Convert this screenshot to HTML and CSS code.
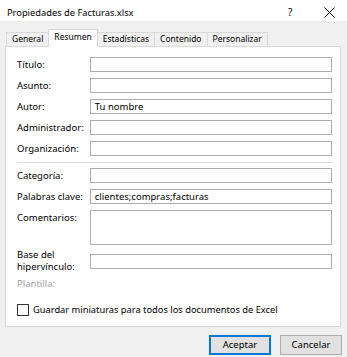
FILE: index.html
```html
<!DOCTYPE html>
<html lang="es">
<head>
    <meta charset="UTF-8">
    <title>Propiedades de Facturas.xlsx</title>
    <link rel="stylesheet" href="styles.css">
</head>
<body>
    <div id="dialog">
        <div class="titlebar">
            <span class="title">Propiedades de Facturas.xlsx</span>
            <span class="help">?</span>
            <span class="close">
                <svg width="11" height="11" viewBox="0 0 11 11"><path d="M0.5 0.5L10.5 10.5M10.5 0.5L0.5 10.5" stroke="#000" stroke-width="1" fill="none"/></svg>
            </span>
        </div>

        <ul class="tabs">
            <li>General</li>
            <li class="active">Resumen</li>
            <li>Estadísticas</li>
            <li>Contenido</li>
            <li>Personalizar</li>
        </ul>

        <div class="panel">
            <div class="row"><label>Título:</label><div class="field"></div></div>
            <div class="row"><label>Asunto:</label><div class="field"></div></div>
            <div class="row"><label>Autor:</label><div class="field">Tu nombre</div></div>
            <div class="row"><label>Administrador:</label><div class="field"></div></div>
            <div class="row"><label>Organización:</label><div class="field"></div></div>

            <div class="sep"></div>

            <div class="row"><label>Categoría:</label><div class="field"></div></div>
            <div class="row"><label>Palabras clave:</label><div class="field">clientes;compras;facturas</div></div>
            <div class="row tall"><label>Comentarios:</label><div class="field area"></div></div>
            <div class="row two"><label>Base del<br>hipervínculo:</label><div class="field"></div></div>
            <div class="row plain"><label class="dim">Plantilla:</label></div>

            <div class="check">
                <span class="box"></span>
                <span>Guardar miniaturas para todos los documentos de Excel</span>
            </div>
        </div>

        <div class="buttons">
            <div class="btn default">Aceptar</div>
            <div class="btn">Cancelar</div>
        </div>
    </div>
</body>
</html>
```

FILE: styles.css
```css
*{
    padding: 0;
    margin: 0;
    box-sizing: border-box;
}

body{
    width: 347px;
    height: 357px;
    overflow: hidden;
    background: #f0f0f0;
    font-family: "Noto Sans", "Open Sans", sans-serif;
    font-size: 9.5px;
    color: #000;
}

.titlebar{
    height: 21px;
    background: #fff;
    display: flex;
    align-items: center;
    padding: 3px 0 0 7px;
}

.title{
    flex: 1;
    font-size: 9.3px;
}

.help{
    width: 10px;
    margin-right: 26px;
    font-size: 10px;
}

.close{
    width: 11px;
    margin-right: 12px;
    display: flex;
}

.tabs{
    display: flex;
    align-items: flex-end;
    height: 25px;
    padding-left: 6px;
    list-style: none;
    font-size: 8.5px;
}

.tabs li{
    height: 14px;
    line-height: 12px;
    padding: 0 5px;
    border: 1px solid #d9d9d9;
    border-bottom: none;
    border-right: none;
    background: #f0f0f0;
    white-space: nowrap;
}

.tabs li:last-child{
    border-right: 1px solid #d9d9d9;
}

.tabs li.active{
    height: 18px;
    line-height: 14px;
    background: #fff;
    border-right: 1px solid #d9d9d9;
    margin-bottom: -1px;
    position: relative;
    z-index: 1;
}

.tabs li.active + li{
    border-left: none;
}

.panel{
    margin: 0 6px 0 5px;
    height: 281px;
    background: #fff;
    border: 1px solid #d9d9d9;
    padding: 10px 8px 0 11px;
}

.row{
    display: flex;
    align-items: center;
    height: 15px;
    margin-bottom: 6px;
}

.row label{
    width: 73px;
    white-space: nowrap;
}

.field{
    width: 243px;
    height: 15px;
    border: 1px solid #acacac;
    padding-left: 4px;
    line-height: 13px;
}

.row.tall{
    height: 35px;
    align-items: flex-start;
    margin-bottom: 4px;
}

.row.tall label{
    margin-top: 1px;
}

.field.area{
    height: 35px;
}

.row.two{
    height: 24px;
    margin-bottom: 4px;
}

.row.two label{
    line-height: 12px;
}

.row.plain{
    height: 13px;
    margin-bottom: 13px;
}

.dim{
    color: #a0a0a0;
}

.sep{
    height: 1px;
    width: 316px;
    background: #dcdcdc;
    margin: 4px 0 5px;
}

.check{
    display: flex;
    align-items: center;
    gap: 4px;
    font-size: 9.3px;
}

.box{
    width: 12px;
    height: 12px;
    border: 1px solid #333;
}

.buttons{
    display: flex;
    justify-content: flex-end;
    gap: 9px;
    padding: 8px 5px 0 0;
}

.btn{
    width: 62px;
    height: 20px;
    line-height: 18px;
    text-align: center;
    background: #e1e1e1;
    border: 1px solid #adadad;
}

.btn.default{
    border: 1px solid #0078d7;
    box-shadow: inset 0 0 0 1px #0078d7;
}
```
